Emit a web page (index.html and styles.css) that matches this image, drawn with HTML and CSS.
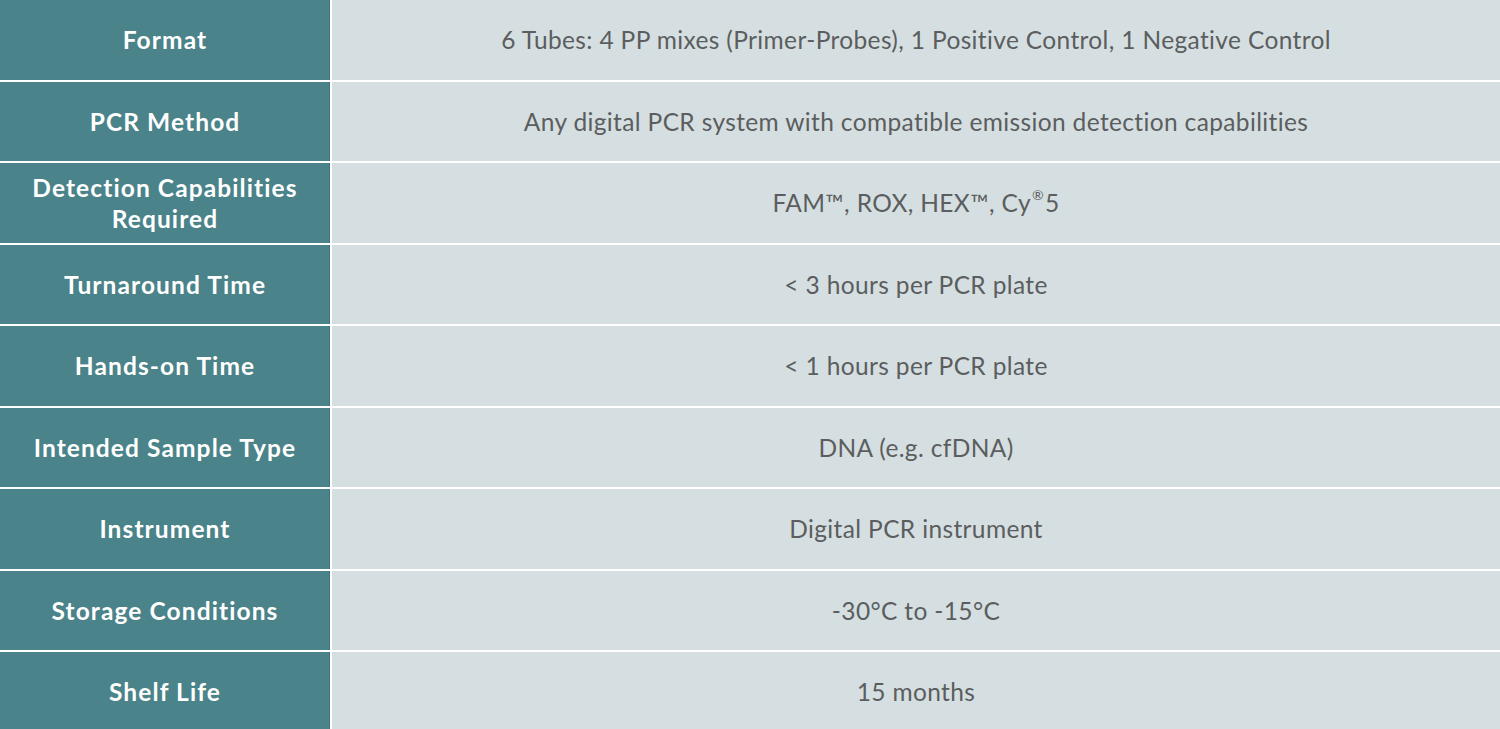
FILE: index.html
```html
<!DOCTYPE html>
<html>
<head>
<meta charset="utf-8">
<link rel="stylesheet" href="styles.css">
</head>
<body>
<div class="spec">
  <div class="row"><div class="key">Format</div><div class="val">6 Tubes: 4 PP mixes (Primer-Probes), 1 Positive Control, 1 Negative Control</div></div>
  <div class="row"><div class="key">PCR Method</div><div class="val">Any digital PCR system with compatible emission detection capabilities</div></div>
  <div class="row"><div class="key">Detection Capabilities<br>Required</div><div class="val">FAM™, ROX, HEX™, Cy<span class="reg">®</span>5</div></div>
  <div class="row"><div class="key">Turnaround Time</div><div class="val">&lt; 3 hours per PCR plate</div></div>
  <div class="row"><div class="key">Hands-on Time</div><div class="val">&lt; 1 hours per PCR plate</div></div>
  <div class="row"><div class="key">Intended Sample Type</div><div class="val">DNA (e.g. cfDNA)</div></div>
  <div class="row"><div class="key">Instrument</div><div class="val">Digital PCR instrument</div></div>
  <div class="row"><div class="key">Storage Conditions</div><div class="val">-30°C to -15°C</div></div>
  <div class="row"><div class="key">Shelf Life</div><div class="val">15 months</div></div>
</div>
</body>
</html>
```
FILE: styles.css
```css
html, body {
  margin: 0;
  padding: 0;
  background: #ffffff;
}
body {
  width: 1500px;
  height: 729px;
  overflow: hidden;
}
.spec {
  display: grid;
  grid-auto-rows: 79.5px;
  row-gap: 2px;
  font-family: Lato, "Open Sans", sans-serif;
}
.row {
  display: grid;
  grid-template-columns: 330px 1fr;
  column-gap: 2px;
}
.key {
  background: #4a8389;
  color: #ffffff;
  font-weight: 700;
  font-size: 24.5px;
  letter-spacing: 1.1px;
  line-height: 31px;
  display: flex;
  align-items: center;
  justify-content: center;
  text-align: center;
  box-shadow: inset -1px 0 0 #3f767c;
}
.val {
  background: #d5dfe1;
  color: #5b5d5e;
  font-size: 24.5px;
  letter-spacing: 0.36px;
  display: flex;
  align-items: center;
  justify-content: center;
  text-align: center;
}
.reg {
  font-size: 14px;
  position: relative;
  top: -8px;
  margin: 0 1px;
}
```
